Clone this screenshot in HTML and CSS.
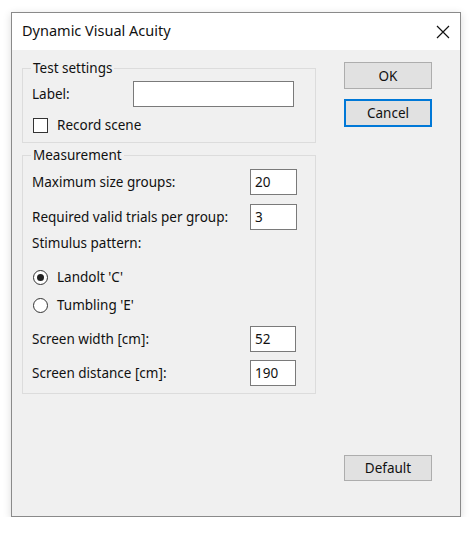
FILE: index.html
```html
<!DOCTYPE html>
<html>
<head>
<meta charset="utf-8">
<link rel="stylesheet" href="styles.css">
</head>
<body>
<div class="window">
  <div class="titlebar">
    <span class="title">Dynamic Visual Acuity</span>
    <svg class="close" width="14" height="14" viewBox="0 0 14 14"><path d="M1 1 L13 13 M13 1 L1 13" stroke="#111" stroke-width="1.2" fill="none"/></svg>
  </div>
  <div class="client">
    <div class="left">
      <fieldset class="group g1">
        <legend>Test settings</legend>
        <div class="row label-row">
          <span class="lbl lbl-short">Label:</span>
          <span class="edit edit-wide"></span>
        </div>
        <div class="check-row">
          <span class="checkbox"></span>
          <span>Record scene</span>
        </div>
      </fieldset>
      <fieldset class="group g2">
        <legend>Measurement</legend>
        <div class="row r1">
          <span class="lbl">Maximum size groups:</span>
          <span class="edit">20</span>
        </div>
        <div class="row r2">
          <span class="lbl">Required valid trials per group:</span>
          <span class="edit">3</span>
        </div>
        <div class="stim">Stimulus pattern:</div>
        <div class="radio-row rr1">
          <span class="radio on"></span>
          <span>Landolt 'C'</span>
        </div>
        <div class="radio-row rr2">
          <span class="radio"></span>
          <span>Tumbling 'E'</span>
        </div>
        <div class="row r3">
          <span class="lbl">Screen width [cm]:</span>
          <span class="edit edit-n">52</span>
        </div>
        <div class="row r4">
          <span class="lbl">Screen distance [cm]:</span>
          <span class="edit edit-n">190</span>
        </div>
      </fieldset>
    </div>
    <div class="right">
      <div class="btn">OK</div>
      <div class="btn focus">Cancel</div>
      <div class="btn default">Default</div>
    </div>
  </div>
</div>
</body>
</html>
```

FILE: styles.css
```css
html, body {
  margin: 0;
  padding: 0;
  background: #ffffff;
}
body {
  font-family: "Noto Sans", "Open Sans", sans-serif;
  font-size: 13.5px;
  color: #111;
}
.window {
  margin: 12px 0 0 11px;
  width: 448px;
  height: 503px;
  border: 1px solid #8a8a8a;
  background: #f0f0f0;
  box-shadow: 0 2px 8px rgba(0,0,0,0.15);
  display: flex;
  flex-direction: column;
}
.titlebar {
  box-sizing: border-box;
  height: 37px;
  background: #ffffff;
  display: flex;
  align-items: center;
  justify-content: space-between;
  padding: 0 10px 3px 10px;
}
.title {
  font-size: 14.5px;
}
.close {
  margin-top: 3px;
}
.client {
  flex: 1;
  display: flex;
}
.left {
  width: 294px;
  margin-left: 10px;
  padding-top: 9px;
}
.group {
  margin: 0;
  border: 1px solid #dcdcdc;
  padding: 0 8px 7px 9px;
  min-width: 0;
}
.group legend {
  padding: 0 2px;
  margin-left: -1px;
  height: 18px;
  line-height: 18px;
}
.g2 {
  margin-top: 3px;
}
.g2 legend {
  margin-top: 1px;
}
.row {
  display: flex;
  align-items: center;
  height: 26px;
}
.lbl {
  width: 218px;
}
.lbl-short {
  width: 101px;
}
.edit {
  box-sizing: border-box;
  height: 26px;
  width: 47px;
  border: 1px solid #7a7a7a;
  background: #fff;
  padding-left: 4px;
  line-height: 24px;
}
.edit-n {
  width: 46px;
}
.edit-wide {
  width: 161px;
}
.label-row {
  margin-top: 4px;
}
.check-row, .radio-row {
  display: flex;
  align-items: center;
  height: 20px;
  gap: 9px;
}
.check-row {
  margin-top: 8px;
  padding-left: 1px;
}
.checkbox {
  box-sizing: border-box;
  width: 15px;
  height: 15px;
  border: 1px solid #333;
  background: #fff;
}
.radio {
  box-sizing: border-box;
  width: 15px;
  height: 15px;
  border: 1px solid #333;
  border-radius: 50%;
  background: #fff;
  display: flex;
  align-items: center;
  justify-content: center;
}
.radio.on::after {
  content: "";
  width: 7px;
  height: 7px;
  border-radius: 50%;
  background: #222;
}
.radio-row {
  padding-left: 1px;
}
.r1 { margin-top: 5px; }
.r2 { margin-top: 9px; }
.stim {
  height: 20px;
  line-height: 20px;
  margin-top: 3px;
}
.rr1 { margin-top: 14px; }
.rr2 { margin-top: 8px; }
.r3 { margin-top: 11px; }
.r4 { margin-top: 8px; }
.right {
  margin-left: 28px;
  width: 88px;
  display: flex;
  flex-direction: column;
  padding-top: 12px;
  padding-bottom: 35px;
}
.btn {
  box-sizing: border-box;
  height: 27px;
  border: 1px solid #adadad;
  background: #e1e1e1;
  display: flex;
  align-items: center;
  justify-content: center;
}
.btn.focus {
  margin-top: 10px;
  border: 2px solid #0078d7;
  height: 28px;
}
.btn.default {
  margin-top: auto;
  height: 26px;
}
```
